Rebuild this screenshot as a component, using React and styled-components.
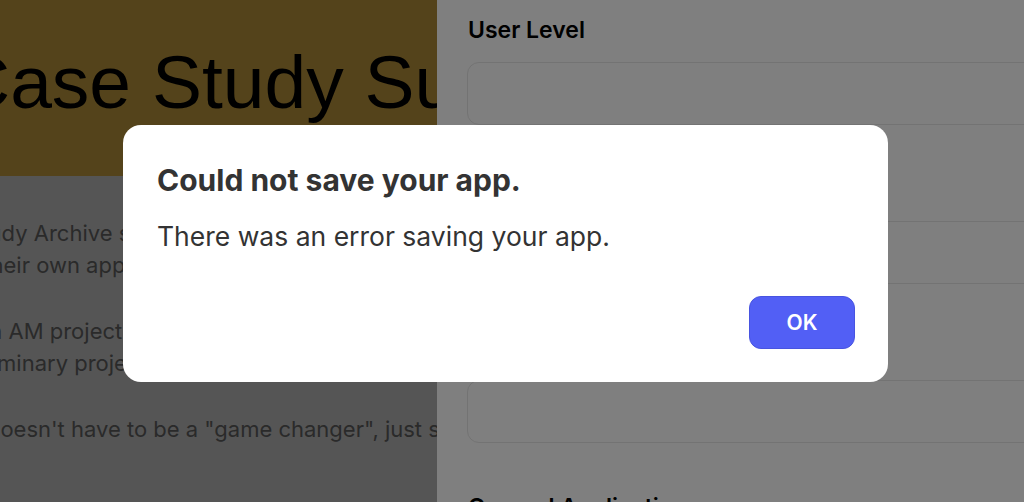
import React from "react";
import styled, { createGlobalStyle } from "styled-components";

const GlobalStyle = createGlobalStyle`
    html, body {
        margin: 0;
        padding: 0;
        height: 100%;
        overflow: hidden;
    }
    body {
        font-family: Inter, "Noto Sans", sans-serif;
    }
    #root {
        height: 100%;
    }
`

const Page = styled.div`
    display: flex;
    height: 100vh;
    width: 100vw;
    overflow: hidden;
`

const Preview = styled.div`
    background-color: #aaaaaa;
    flex: 0 0 437px;
    overflow: hidden;
`

const PreviewScroll = styled.div`
    margin-left: -138px;
    width: 900px;
`

const Banner = styled.div`
    background-color: #a98636;
    box-sizing: border-box;
    height: 176px;
    padding: 45px 0 0 94px;
`

const BannerTitle = styled.h1`
    color: #000;
    font-family: "Liberation Sans", Arial, sans-serif;
    font-size: 75px;
    font-weight: 400;
    line-height: 75px;
    margin: 0;
    white-space: nowrap;
`

const Copy = styled.div`
    display: flex;
    flex-direction: column;
    gap: 34px;
    padding-top: 41px;
`

const Para = styled.p`
    color: #555;
    font-size: 22px;
    line-height: 32px;
    margin: 0;
`

const Line = styled.span`
    display: block;
    white-space: nowrap;
`

const Settings = styled.div`
    background-color: #fff;
    box-sizing: border-box;
    flex: 1;
    overflow: hidden;
    padding: 16px 0 0 30px;
`

const Field = styled.div`
    display: flex;
    flex-direction: column;
    gap: 18px;
    margin-bottom: 50px;
`

const Label = styled.label`
    color: #000;
    font-size: 23px;
    font-weight: 600;
    line-height: 28px;
    padding-left: 1px;
`

const Input = styled.input`
    background: #fff;
    border: 1px solid #e6e6e6;
    border-radius: 12px;
    box-sizing: border-box;
    height: 63px;
    outline: none;
    width: 640px;
`

const Backdrop = styled.div`
    align-items: center;
    background-color: rgba(0,0,0,.5);
    box-sizing: border-box;
    display: flex;
    inset: 0;
    justify-content: center;
    padding: 5px 13px 0 0;
    position: fixed;
`

const Dialog = styled.div`
    background-color: #fff;
    border-radius: 18px;
    box-sizing: border-box;
    display: flex;
    flex-direction: column;
    padding: 38px 33px 33px 34px;
    width: 765px;
`

const DialogTitle = styled.h2`
    color: #333;
    font-size: 30px;
    font-weight: 700;
    line-height: 34px;
    margin: 0 0 20px;
`

const DialogText = styled.p`
    color: #333;
    font-size: 26.5px;
    line-height: 39px;
    margin: 0 0 40px;
`

const Actions = styled.div`
    display: flex;
    justify-content: flex-end;
`

const OkButton = styled.button`
    background-color: #525ff5;
    border: 1px solid #4854e0;
    border-radius: 12px;
    color: #fff;
    cursor: pointer;
    font-family: Inter, sans-serif;
    font-size: 21px;
    font-weight: 600;
    height: 53px;
    outline: none;
    width: 106px;
`

const fields = ["User Level", "Team", "Industry", "General Application"];

function App(){
    return(
    <>
        <GlobalStyle/>
        <Page>
            <Preview>
                <PreviewScroll>
                    <Banner>
                        <BannerTitle>Case Study Submission</BannerTitle>
                    </Banner>
                    <Copy>
                        <Para>
                            <Line>The Case Study Archive showcases the best work from our community</Line>
                            <Line>example of their own apps built and shipped with the platform.</Line>
                        </Para>
                        <Para>
                            <Line>Begin with an AM project you have already completed,</Line>
                            <Line>and one preliminary project note and its outcome.</Line>
                        </Para>
                        <Para>
                            <Line>The project doesn't have to be a "game changer", just something useful.</Line>
                        </Para>
                    </Copy>
                </PreviewScroll>
            </Preview>
            <Settings>
                {fields.map((name)=>
                    <Field key={name}>
                        <Label>{name}</Label>
                        <Input type="text" readOnly/>
                    </Field>
                )}
            </Settings>
        </Page>
        <Backdrop>
            <Dialog role="alertdialog">
                <DialogTitle>Could not save your app.</DialogTitle>
                <DialogText>There was an error saving your app.</DialogText>
                <Actions>
                    <OkButton type="button">OK</OkButton>
                </Actions>
            </Dialog>
        </Backdrop>
    </>
    )
}

export default App;
